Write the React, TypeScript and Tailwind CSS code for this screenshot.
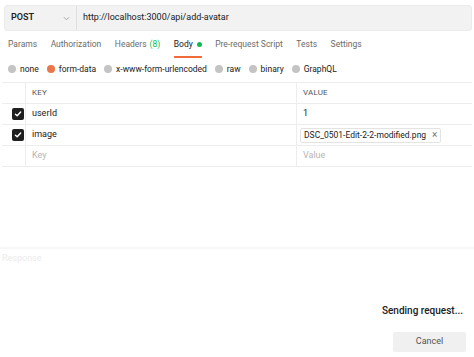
import React from 'react';

const tabs = ['Params', 'Authorization', 'Headers', 'Body', 'Pre-request Script', 'Tests', 'Settings'];
const bodyTypes = ['none', 'form-data', 'x-www-form-urlencoded', 'raw', 'binary', 'GraphQL'];

const Check: React.FC = () => (
    <div className="w-[12px] h-[12px] rounded-[2px] bg-[#1f1f1f] flex items-center justify-center">
        <svg width="8" height="8" viewBox="0 0 10 10">
            <path d="M1.8 5.2 L4 7.3 L8.3 2.6" stroke="#fff" strokeWidth="1.8" fill="none" strokeLinecap="round" strokeLinejoin="round" />
        </svg>
    </div>
);

export default function App() {
    return (
        <div className="w-[474px] h-[357px] bg-white overflow-hidden flex flex-col text-[#212121]" style={{ fontFamily: 'Roboto, "Liberation Sans", sans-serif' }}>
            {/* Request bar */}
            <div className="mt-[5px] ml-[4px] mr-[2px] h-[26px] flex bg-[#f2f2f2] border border-[#ebebeb] rounded-[3px]">
                <div className="w-[72px] flex items-center justify-between pl-[6px] pr-[6px] border-r border-[#e0e0e0]">
                    <span className="text-[9px] font-semibold text-[#212121]">POST</span>
                    <svg width="7" height="5" viewBox="0 0 8 5">
                        <path d="M1 1 L4 4 L7 1" stroke="#9a9a9a" strokeWidth="1" fill="none" />
                    </svg>
                </div>
                <div className="flex items-center pl-[6px] text-[9px] text-[#212121]">http://localhost:3000/api/add-avatar</div>
            </div>

            {/* Tabs */}
            <div className="flex items-end h-[27px] pl-[8px] gap-[13.5px] text-[8.5px] text-[#6b6b6b]">
                {tabs.map((t) => (
                    <div key={t} className={`flex items-center h-[25px] ${t === 'Body' ? 'border-b-2 border-[#f26b3a] text-[#212121]' : 'border-b-2 border-transparent'}`}>
                        <span>{t}</span>
                        {t === 'Headers' && <span className="ml-[3px] text-[#0cbb52]">(8)</span>}
                        {t === 'Body' && <span className="ml-[4px] w-[5px] h-[5px] rounded-full bg-[#0cbb52]" />}
                    </div>
                ))}
            </div>

            {/* Body types */}
            <div className="flex items-center h-[24px] pl-[8px] gap-[8px] text-[8.5px] text-[#212121] mt-[-1px]">
                {bodyTypes.map((b) => (
                    <div key={b} className="flex items-center gap-[4px]">
                        <span className={`w-[8px] h-[8px] rounded-full ${b === 'form-data' ? 'bg-[#e8784b]' : 'bg-[#c4c4c4]'}`} />
                        <span>{b}</span>
                    </div>
                ))}
            </div>

            {/* Table */}
            <div className="ml-[2px] mr-[2px] mt-[1px] border-t border-[#ededed] text-[9px]">
                <div className="grid grid-cols-[24px_271px_1fr] h-[20px] box-content border-b border-[#ededed]">
                    <div className="border-r border-[#ededed]" />
                    <div className="flex items-center pl-[6px] text-[#555] border-r border-[#ededed] text-[8px] tracking-[0.2px]">KEY</div>
                    <div className="flex items-center pl-[6px] text-[#555] text-[8px] tracking-[0.2px]">VALUE</div>
                </div>
                <div className="grid grid-cols-[24px_271px_1fr] h-[20px] box-content border-b border-[#ededed]">
                    <div className="flex items-center justify-end pr-[1px] border-r border-[#ededed]"><Check /></div>
                    <div className="flex items-center pl-[6px] border-r border-[#ededed]">userId</div>
                    <div className="flex items-center pl-[6px]">1</div>
                </div>
                <div className="grid grid-cols-[24px_271px_1fr] h-[20px] box-content border-b border-[#ededed]">
                    <div className="flex items-center justify-end pr-[1px] border-r border-[#ededed]"><Check /></div>
                    <div className="flex items-center pl-[6px] border-r border-[#ededed]">image</div>
                    <div className="flex items-center pl-[3px]">
                        <div className="flex items-center h-[15px] px-[3px] gap-[6px] border border-[#e3e3e3] rounded-[2px] text-[8.5px]">
                            <span>DSC_0501-Edit-2-2-modified.png</span>
                            <span className="text-[#777] text-[10px] leading-none">×</span>
                        </div>
                    </div>
                </div>
                <div className="grid grid-cols-[24px_271px_1fr] h-[20px] box-content border-b border-[#ededed] text-[#b5b5b5]">
                    <div className="border-r border-[#ededed]" />
                    <div className="flex items-center pl-[6px] border-r border-[#ededed]">Key</div>
                    <div className="flex items-center pl-[6px]">Value</div>
                </div>
            </div>

            {/* Response */}
            <div className="mt-[80px] border-t-2 border-[#f6f6f6] flex-1 flex flex-col">
                <div className="pl-[2px] pt-[3px] text-[9px] text-[#ebebeb]">Response</div>
                <div className="flex-1 flex flex-col items-end justify-end pr-[8px] pb-[5px]">
                    <div className="text-[10px] font-medium text-[#212121] mr-[3px]">Sending request...</div>
                    <button className="mt-[14px] w-[73px] h-[20px] bg-[#f0f0f0] rounded-[2px] text-[9px] text-[#555]">Cancel</button>
                </div>
            </div>
        </div>
    );
}
